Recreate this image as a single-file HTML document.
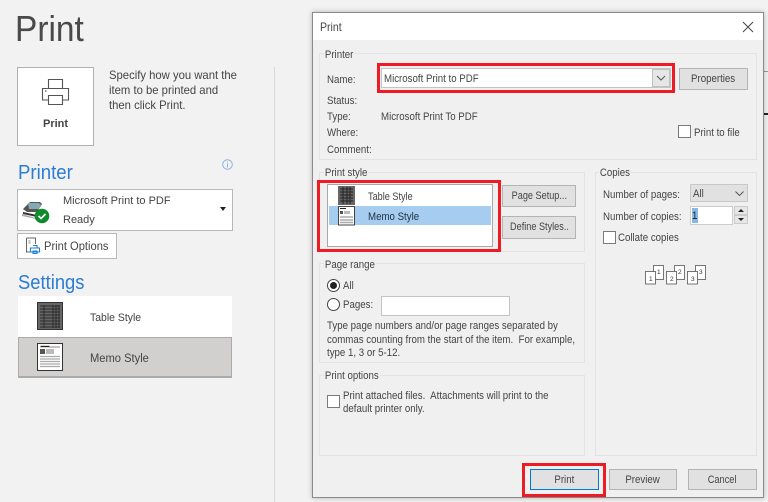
<!DOCTYPE html>
<html><head><meta charset="utf-8"><title>Print</title>
<style>
html,body{margin:0;padding:0}
body{width:768px;height:502px;overflow:hidden;background:#f2f2f2;position:relative;font-family:"Liberation Sans",sans-serif;color:#444}
#w{position:absolute;left:0;top:0;width:768px;height:502px;overflow:hidden;filter:blur(.35px)}
.a{position:absolute;box-sizing:border-box}
.t{position:absolute;white-space:nowrap;font-size:11px;line-height:14px;color:#444;transform:translateY(var(--y,0)) scaleX(var(--s,1));transform-origin:0 0}
.h{position:absolute;white-space:nowrap;font-size:20px;line-height:24px;color:#2b7cd3;transform:scaleX(var(--s,1));transform-origin:0 0}
.g{position:absolute;box-sizing:border-box;border:1px solid #e3e3e3}
.l{position:absolute;white-space:nowrap;font-size:11px;line-height:14px;color:#444;background:#f0f0f0;padding:0 1px;transform:translateY(var(--y,0)) scaleX(var(--s,1));transform-origin:0 0}
.b{position:absolute;box-sizing:border-box;background:#e1e1e1;border:1px solid #b4b4b4;font-size:11px;color:#444;text-align:center;white-space:nowrap;overflow:hidden}
.b span{display:inline-block;transform:scaleX(var(--s,.88));margin:0 -20px}
.c{position:absolute;box-sizing:border-box;background:#fff;border:1px solid #7a7a7a}
.r{position:absolute;box-sizing:border-box;border:3px solid #ed1c24}
</style></head><body><div id="w">
<div class="t" style="left:15px;top:7px;font-size:36px;line-height:44px;color:#4a4a4a;--s:.93">Print</div>
<div class="a" style="left:17px;top:67px;width:77px;height:79px;background:#fff;border:1px solid #b0b0b0"></div>
<svg class="a" style="left:41px;top:78px" width="29" height="28" viewBox="0 0 29 28" fill="none" stroke="#555" stroke-width="1.100"><path d="M7.500 10V1.500h14V10M7.500 22H1.500V10.500h26V22h-6M7.500 17.500h14v9h-14z"/><path d="M4 13h1.500" stroke-width="1.300"/></svg>
<div class="t" style="left:43px;top:117px;font-weight:bold;font-size:11px">Print</div>
<div class="t" style="left:109px;top:68px;font-size:12px;line-height:15px;--s:.94">Specify how you want the<br>item to be printed and<br>then click Print.</div>
<div class="h" style="left:18px;top:161px;--s:.93">Printer</div>
<svg class="a" style="left:221px;top:158px" width="13" height="13" viewBox="0 0 13 13" fill="none" stroke="#8db4e2"><circle cx="6.500" cy="6.500" r="4.800"/><path d="M6.500 5.500v4M6.500 3.500v1"/></svg>
<div class="a" style="left:17px;top:189px;width:216px;height:42px;background:#fff;border:1px solid #b8b8b8"></div>
<svg class="a" style="left:21px;top:199px" width="30" height="25" viewBox="0 0 30 25"><path d="M2 10 9 3h10l2 2-5 8H6z" fill="#555"/><path d="M7 4h11l2 2-2 4H8z" fill="#86aab5"/><path d="M2 13l14 3v2L2 15z" fill="#333"/><path d="M1 15l14 4v1L1 17z" fill="#aaa"/><circle cx="21" cy="17" r="7.300" fill="#0f8a2c"/><path d="M17.500 17l2.500 2.500 4.500-4.500" fill="none" stroke="#fff" stroke-width="1.600"/></svg>
<div class="t" style="left:63px;top:194px">Microsoft Print to PDF</div>
<div class="t" style="left:63px;top:213px">Ready</div>
<div class="a" style="left:220px;top:207px;width:0;height:0;border:3px solid transparent;border-top:4px solid #222;border-bottom:0"></div>
<div class="a" style="left:17px;top:233px;width:100px;height:26px;background:#fff;border:1px solid #b8b8b8"></div>
<svg class="a" style="left:25px;top:237px" width="16" height="17" viewBox="0 0 16 17" fill="none"><path d="M1.500 1h9v6M1.500 1v14h4" stroke="#666"/><path d="M3.500 4h2M3.500 6h2" stroke="#888"/><path d="M8 8.500h4V11M5.500 11h9v4h-9zM8 14h4v2.500H8z" stroke="#1f7fd0" stroke-width="1.100"/></svg>
<div class="t" style="left:44px;top:240px;font-size:11.500px;--s:.97">Print Options</div>
<div class="a" style="left:274px;top:67px;width:1px;height:435px;background:#d8d8d8"></div>
<div class="h" style="left:18px;top:271px;--s:.92">Settings</div>
<div class="a" style="left:18px;top:296px;width:214px;height:41px;background:#fff"></div>
<div class="a" style="left:18px;top:337px;width:214px;height:41px;background:#d2d0ce;border:1px solid #ababab;border-bottom-width:2px"></div>
<svg class="a" style="left:37px;top:302px" width="27" height="29" viewBox="0 0 27 29"><rect x=".5" y=".5" width="25" height="27" fill="#666" stroke="#333"/><path d="M3 4h20M3 7h20M3 10h20M3 13h20M3 16h20M3 19h20M3 22h20M3 25h20M7 3v23M16 3v23M19 3v23M22 3v23" stroke="#2a2a2a" stroke-width=".9"/></svg>
<svg class="a" style="left:37px;top:343px" width="27" height="29" viewBox="0 0 27 29"><rect x=".5" y=".5" width="25" height="27" fill="#fff" stroke="#333"/><path d="M3.500 3.500h9" stroke="#222" stroke-width="1.400"/><path d="M12 4h11" stroke="#888"/><rect x="3" y="6" width="5" height="5" fill="#555"/><rect x="9" y="6" width="8" height="5" fill="#bbb"/><path d="M3 13.500h20M3 16h20M3 18.500h20M3 21h20M3 23.500h20" stroke="#aaa" stroke-width="1.200"/></svg>
<div class="t" style="left:90px;top:311px;--s:.95">Table Style</div>
<div class="t" style="left:90px;top:352px;font-size:11.500px;--s:.97">Memo Style</div>

<div class="a" style="left:763px;top:71px;width:5px;height:1px;background:#999"></div>
<div class="a" style="left:763px;top:113px;width:5px;height:2px;background:#222"></div>
<div class="a" style="left:312px;top:12px;width:452px;height:486px;background:#f0f0f0;border:1px solid #8a8a8a;box-shadow:0 0 5px rgba(0,0,0,.25)"></div>
<div class="a" style="left:313px;top:13px;width:450px;height:27px;background:#fff"></div>
<div style="--s:.88;--y:1px">
<div class="t" style="left:320px;top:19px;font-size:12px">Print</div>
<svg class="a" style="left:741px;top:20px" width="14" height="14" viewBox="0 0 14 14" stroke="#444" fill="none"><path d="M2 2l10 10M12 2L2 12"/></svg>

<div class="g" style="left:319px;top:53px;width:438px;height:107px"></div>
<div class="l" style="left:324px;top:47px">Printer</div>
<div class="a" style="left:381px;top:68px;width:290px;height:20px;background:#fff;border:1px solid #c4c4c4"></div>
<div class="a" style="left:652px;top:69px;width:18px;height:18px;background:#e6e6e6;border:1px solid #c0c0c0"></div>
<svg class="a" style="left:656px;top:75px" width="10" height="6" viewBox="0 0 10 6" fill="none" stroke="#555"><path d="M1 1l4 4 4-4"/></svg>
<div class="r" style="left:377px;top:63px;width:298px;height:30px"></div>
<div class="t" style="left:384px;top:71px">Microsoft Print to PDF</div>
<div class="b" style="left:679px;top:68px;width:69px;height:22px;line-height:20px"><span>Properties</span></div>
<div class="t" style="left:327px;top:72px">Name:</div>
<div class="t" style="left:327px;top:93px">Status:</div>
<div class="t" style="left:327px;top:109px">Type:</div>
<div class="t" style="left:381px;top:109px">Microsoft Print To PDF</div>
<div class="t" style="left:327px;top:125px">Where:</div>
<div class="t" style="left:327px;top:142px">Comment:</div>
<div class="c" style="left:678px;top:125px;width:13px;height:13px"></div>
<div class="t" style="left:694px;top:125px">Print to file</div>

<div class="g" style="left:319px;top:172px;width:266px;height:80px"></div>
<div class="l" style="left:324px;top:165px">Print style</div>
<div class="a" style="left:327px;top:184px;width:166px;height:63px;background:#fff;border:1px solid #a8a8a8"></div>
<div class="a" style="left:329px;top:206px;width:162px;height:19px;background:#a6cdf0"></div>
<svg class="a" style="left:338px;top:186px" width="17" height="20" viewBox="0 0 17 20"><rect x="0" y="0" width="17" height="19" fill="#666"/><path d="M2 3h13M2 6h13M2 9h13M2 12h13M2 15h13M5 1v17M9 1v17M12 1v17" stroke="#222"/></svg>
<svg class="a" style="left:338px;top:206px" width="17" height="20" viewBox="0 0 17 20"><rect x=".5" y=".5" width="16" height="18.500" fill="#fff" stroke="#444"/><path d="M2 2.500h6" stroke="#222"/><rect x="2" y="5" width="3" height="3" fill="#555"/><rect x="6" y="5" width="6" height="3" fill="#bbb"/><path d="M2 11h13M2 14h13M2 16.500h13" stroke="#aaa" stroke-width="1.500"/></svg>
<div class="t" style="left:368px;top:189px;--s:.83">Table Style</div>
<div class="t" style="left:368px;top:209px;color:#234">Memo Style</div>
<div class="r" style="left:317px;top:180px;width:184px;height:72px"></div>
<div class="b" style="left:502px;top:185px;width:74px;height:22px;line-height:20px;--s:.83"><span>Page Setup...</span></div>
<div class="b" style="left:502px;top:216px;width:74px;height:23px;line-height:21px;--s:.83"><span>Define Styles..</span></div>

<div class="g" style="left:595px;top:172px;width:162px;height:284px"></div>
<div class="l" style="left:599px;top:165px">Copies</div>
<div class="t" style="left:603px;top:187px">Number of pages:</div>
<div class="a" style="left:690px;top:184px;width:58px;height:18px;background:#e1e1e1;border:1px solid #c8c8c8"></div>
<div class="t" style="left:693px;top:186px">All</div>
<svg class="a" style="left:735px;top:191px" width="9" height="5" viewBox="0 0 9 5" fill="none" stroke="#555"><path d="M.5.500l4 4 4-4"/></svg>
<div class="t" style="left:603px;top:209px">Number of copies:</div>
<div class="a" style="left:690px;top:206px;width:43px;height:19px;background:#fff;border:1px solid #ccc"></div>
<div class="a" style="left:692px;top:208px;width:6px;height:15px;background:#8ab8e6"></div>
<div class="t" style="left:692px;top:208px;color:#123">1</div>
<div class="a" style="left:734px;top:206px;width:14px;height:9px;background:#e6e6e6;border:1px solid #ccc"></div>
<div class="a" style="left:734px;top:215px;width:14px;height:9px;background:#e6e6e6;border:1px solid #ccc"></div>
<div class="a" style="left:738px;top:209px;width:0;height:0;border:3px solid transparent;border-bottom:3px solid #222;border-top:0"></div>
<div class="a" style="left:738px;top:218px;width:0;height:0;border:3px solid transparent;border-top:3px solid #222;border-bottom:0"></div>
<div class="c" style="left:603px;top:231px;width:13px;height:13px"></div>
<div class="t" style="left:618px;top:230px">Collate copies</div>
<svg class="a" style="left:645px;top:265px" width="64" height="20" viewBox="0 0 64 20" fill="#fff" stroke="#555" stroke-width=".8" font-family="Liberation Sans" font-size="6.500"><rect x="8.500" y=".5" width="10" height="14"/><rect x=".5" y="6.500" width="10" height="12.500"/><rect x="29.500" y=".5" width="10" height="14"/><rect x="21.500" y="6.500" width="10" height="12.500"/><rect x="50.500" y=".5" width="10" height="14"/><rect x="42.500" y="6.500" width="10" height="12.500"/><g fill="#333" stroke="none"><text x="12" y="9">1</text><text x="4" y="16">1</text><text x="33" y="9">2</text><text x="25" y="16">2</text><text x="54" y="9">3</text><text x="46" y="16">3</text></g></svg>

<div class="g" style="left:319px;top:263px;width:266px;height:100px"></div>
<div class="l" style="left:324px;top:257px">Page range</div>
<div class="a" style="left:327px;top:279px;width:13px;height:13px;border:1px solid #444;border-radius:50%;background:#fff"></div>
<div class="a" style="left:330px;top:282px;width:7px;height:7px;border-radius:50%;background:#222"></div>
<div class="t" style="left:343px;top:278px">All</div>
<div class="a" style="left:327px;top:298px;width:13px;height:13px;border:1px solid #444;border-radius:50%;background:#fff"></div>
<div class="t" style="left:343px;top:297px">Pages:</div>
<div class="a" style="left:381px;top:296px;width:129px;height:20px;background:#fff;border:1px solid #c4c4c4"></div>
<div class="t" style="left:327px;top:319px;line-height:13.500px">Type page numbers and/or page ranges separated by<br>commas counting from the start of the item.&nbsp; For example,<br>type 1, 3 or 5-12.</div>

<div class="g" style="left:319px;top:375px;width:266px;height:81px"></div>
<div class="l" style="left:324px;top:368px">Print options</div>
<div class="c" style="left:327px;top:395px;width:13px;height:13px"></div>
<div class="t" style="left:343px;top:389px;line-height:13px">Print attached files.&nbsp; Attachments will print to the<br>default printer only.</div>

<div class="b" style="left:530px;top:469px;width:69px;height:21px;line-height:20px;border:1px solid #0078d7"><span>Print</span></div>
<div class="r" style="left:522px;top:463px;width:84px;height:34px"></div>
<div class="b" style="left:609px;top:469px;width:68px;height:21px;line-height:20px"><span>Preview</span></div>
<div class="b" style="left:688px;top:469px;width:69px;height:21px;line-height:20px;--s:.84"><span>Cancel</span></div>
</div>
</div></body></html>
